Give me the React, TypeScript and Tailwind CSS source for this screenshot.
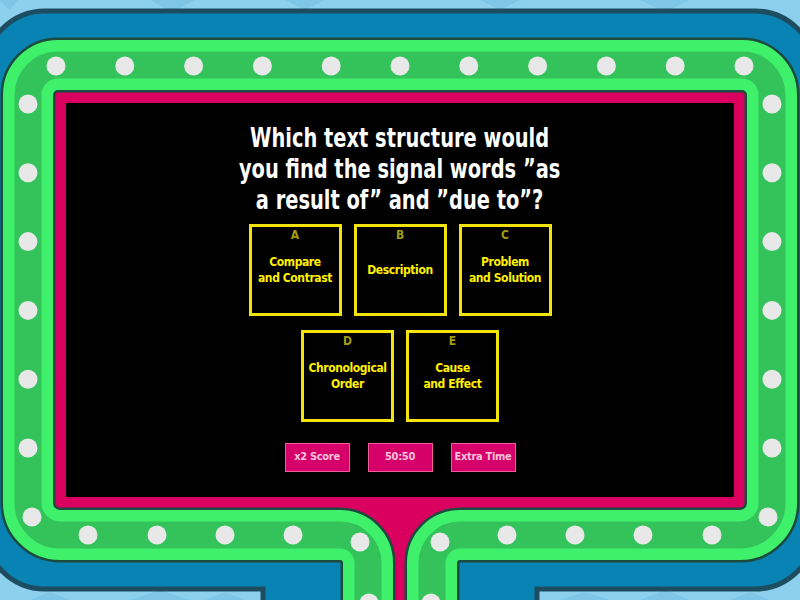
import React from 'react';

const TOP_DOTS = Array.from({ length: 11 }, (_, i) => 56 + i * 68.8);
const SIDE_DOTS = Array.from({ length: 6 }, (_, i) => 104 + i * 68.8);
const BOTTOM_DOTS: [number, number][] = [
  [32, 517], [88, 535], [157, 535], [225, 535], [293, 535], [360, 542], [369, 603],
  [768, 517], [712, 535], [643, 535], [575, 535], [507, 535], [440, 542], [431, 603],
];

const TRACK =
  'M 368 620 V 563 A 28 28 0 0 0 340 535 H 60 A 32 32 0 0 1 28 503 V 95 A 30 30 0 0 1 58 65 H 742 A 30 30 0 0 1 772 95 V 503 A 32 32 0 0 1 740 535 H 460 A 28 28 0 0 0 432 563 V 620';

const QUESTION = ['Which text structure would', 'you find the signal words ”as', 'a result of” and ”due to”?'];

const Frame: React.FC = () => (
  <svg className="absolute inset-0" width="800" height="600" viewBox="0 0 800 600">
    {/* spiky background */}
    <g fill="#7fc6e6">
      <polygon points="0,0 18,0 9,10" />
      <polygon points="150,0 195,0 172,12" />
      <polygon points="285,0 325,0 305,10" />
      <polygon points="480,0 520,0 500,10" />
      <polygon points="640,0 690,0 665,12" />
      <polygon points="30,600 70,600 50,592" />
      <polygon points="130,600 190,600 160,590" />
      <polygon points="205,600 245,600 225,592" />
      <polygon points="560,600 610,600 585,592" />
      <polygon points="640,600 690,600 665,590" />
      <polygon points="730,600 770,600 750,592" />
    </g>
    {/* blue outer frame */}
    <path
      d="M 45 11 H 755 A 60 60 0 0 1 815 71 V 529 A 60 60 0 0 1 755 589 H 537 V 620 H 263 V 589 H 45 A 60 60 0 0 1 -15 529 V 71 A 60 60 0 0 1 45 11 Z"
      fill="#0983b3"
      stroke="#1e4c61"
      strokeWidth="5"
    />
    {/* pink board */}
    <rect x="52" y="90" width="696" height="420" rx="6" fill="#d9005f" />
    <polygon points="340,505 460,505 440,620 360,620" fill="#d9005f" />
    {/* green light track */}
    <path d={TRACK} fill="none" stroke="#1b4a3f" strokeWidth="55" />
    <path d={TRACK} fill="none" stroke="#3ff06b" strokeWidth="50" />
    <path d={TRACK} fill="none" stroke="#33c35a" strokeWidth="27" />
    <g fill="#e8e8e8">
      {TOP_DOTS.map((x) => (
        <circle key={`t${x}`} cx={x} cy="66" r="9.5" />
      ))}
      {SIDE_DOTS.map((y) => (
        <React.Fragment key={`s${y}`}>
          <circle cx="28" cy={y} r="9.5" />
          <circle cx="772" cy={y} r="9.5" />
        </React.Fragment>
      ))}
      {BOTTOM_DOTS.map(([x, y]) => (
        <circle key={`b${x}`} cx={x} cy={y} r="9.5" />
      ))}
    </g>
  </svg>
);

const AnswerBox: React.FC<{ letter: string; label: string[] }> = ({ letter, label }) => (
  <div className="w-[93px] h-[92px] border-[3px] border-[#f3e30d] flex flex-col">
    <div className="h-[16px] pt-[1px] text-center text-[12px] leading-[14px] font-bold text-[#a39c10]">
      {letter}
    </div>
    <div className="flex-1 flex flex-col items-center justify-center text-center text-[12px] leading-[16px] tracking-[-0.4px] font-bold text-[#fff000] whitespace-nowrap">
      {label.map((l) => (
        <span key={l}>{l}</span>
      ))}
    </div>
    <div className="h-[16px]" />
  </div>
);

const PowerUp: React.FC<{ label: string }> = ({ label }) => (
  <div className="w-[65px] h-[29px] bg-[#d5006a] border-[1.5px] border-[#ee5c9a] flex items-center justify-center text-[11px] tracking-[-0.3px] font-bold text-[#f9c3da] whitespace-nowrap">
    {label}
  </div>
);

export default function App() {
  return (
    <div
      className="relative w-[800px] h-[600px] overflow-hidden bg-[#8dd0ee]"
      style={{ fontFamily: '"DejaVu Sans Condensed", "DejaVu Sans", sans-serif' }}
    >
      <Frame />
      <div className="relative pt-[103px] pl-[66px]">
        <div className="w-[668px] h-[394px] bg-black flex flex-col items-center">
          <h1 className="mt-[20px] flex flex-col items-center scale-x-[0.83] text-white font-bold text-[26px] leading-[31px] whitespace-nowrap">
            {QUESTION.map((line) => (
              <span key={line}>{line}</span>
            ))}
          </h1>
          <div className="mt-[8px] flex flex-col items-center gap-[14px]">
            <div className="flex gap-[12px]">
              <AnswerBox letter="A" label={['Compare', 'and Contrast']} />
              <AnswerBox letter="B" label={['Description']} />
              <AnswerBox letter="C" label={['Problem', 'and Solution']} />
            </div>
            <div className="flex gap-[12px]">
              <AnswerBox letter="D" label={['Chronological', 'Order']} />
              <AnswerBox letter="E" label={['Cause', 'and Effect']} />
            </div>
          </div>
          <div className="mt-[21px] flex gap-[18px]">
            <PowerUp label="x2 Score" />
            <PowerUp label="50:50" />
            <PowerUp label="Extra Time" />
          </div>
        </div>
      </div>
    </div>
  );
}
